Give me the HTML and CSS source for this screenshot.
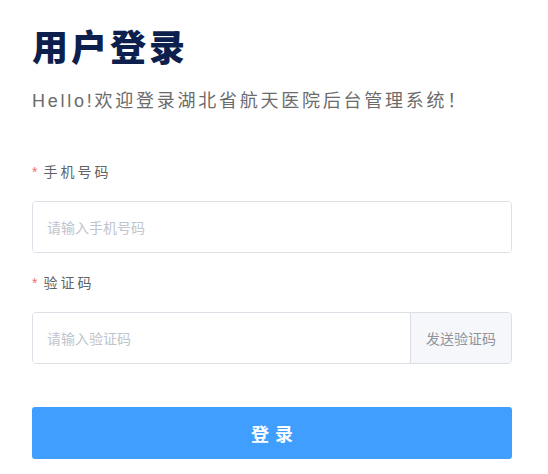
FILE: index.html
```html
<!DOCTYPE html>
<html lang="zh-CN">
<head>
<meta charset="utf-8">
<title>用户登录</title>
<link rel="stylesheet" href="styles.css">
</head>
<body>
<div class="page">
  <h1 class="title">用户登录</h1>
  <p class="subtitle">Hello!欢迎登录湖北省航天医院后台管理系统！</p>
  <form class="form">
    <div class="form-item">
      <label class="label"><span class="req">*</span>手机号码</label>
      <div class="input-wrap">
        <input class="input" type="text" placeholder="请输入手机号码">
      </div>
    </div>
    <div class="form-item">
      <label class="label"><span class="req">*</span>验证码</label>
      <div class="input-wrap">
        <input class="input" type="text" placeholder="请输入验证码">
        <div class="append">发送验证码</div>
      </div>
    </div>
    <button class="submit" type="button">登录</button>
  </form>
</div>
</body>
</html>
```
FILE: styles.css
```css
html, body {
  margin: 0;
  padding: 0;
  background: #fff;
}
body {
  font-family: "Liberation Sans", "Noto Sans CJK SC", sans-serif;
}
.page {
  width: 480px;
  padding: 23px 0 0 32px;
}
.title {
  margin: 0;
  font-size: 36px;
  line-height: 44px;
  font-weight: 900;
  letter-spacing: 3px;
  color: #0d1f4d;
  font-family: "Noto Sans CJK SC", sans-serif;
}
.subtitle {
  margin: 21px 0 0;
  font-size: 18px;
  line-height: 26px;
  letter-spacing: 2.75px;
  color: #6b6b6b;
  font-weight: 400;
}
.form {
  margin-top: 47px;
}
.form-item {
  margin-bottom: 19px;
}
.form-item:last-of-type {
  margin-bottom: 43px;
}
.label {
  display: block;
  height: 20px;
  line-height: 20px;
  font-size: 14px;
  letter-spacing: 3px;
  color: #606266;
  margin-bottom: 20px;
  font-family: "Noto Sans CJK SC", sans-serif;
}
.req {
  color: #f56c6c;
  margin-right: 6px;
  letter-spacing: 0;
  font-family: "Liberation Sans", sans-serif;
}
.input-wrap {
  display: flex;
  height: 52px;
  box-sizing: border-box;
  border: 1px solid #dcdfe6;
  border-radius: 4px;
  overflow: hidden;
}
.input {
  flex: 1;
  min-width: 0;
  border: 0;
  outline: none;
  padding: 0 14px;
  font-size: 14px;
  font-family: "Noto Sans CJK SC", sans-serif;
  color: #606266;
  background: #fff;
}
.input::placeholder {
  color: #c0c4cc;
}
.append {
  display: flex;
  align-items: center;
  padding: 0 15px;
  background: #f5f7fa;
  border-left: 1px solid #dcdfe6;
  color: #909399;
  font-size: 14px;
  font-family: "Noto Sans CJK SC", sans-serif;
}
.submit {
  display: block;
  width: 480px;
  height: 52px;
  border: 0;
  border-radius: 3px;
  background: #409eff;
  color: #fff;
  font-size: 18px;
  font-weight: 700;
  letter-spacing: 6px;
  padding: 0 0 0 6px;
  font-family: "Noto Sans CJK SC", sans-serif;
  cursor: pointer;
}
```
